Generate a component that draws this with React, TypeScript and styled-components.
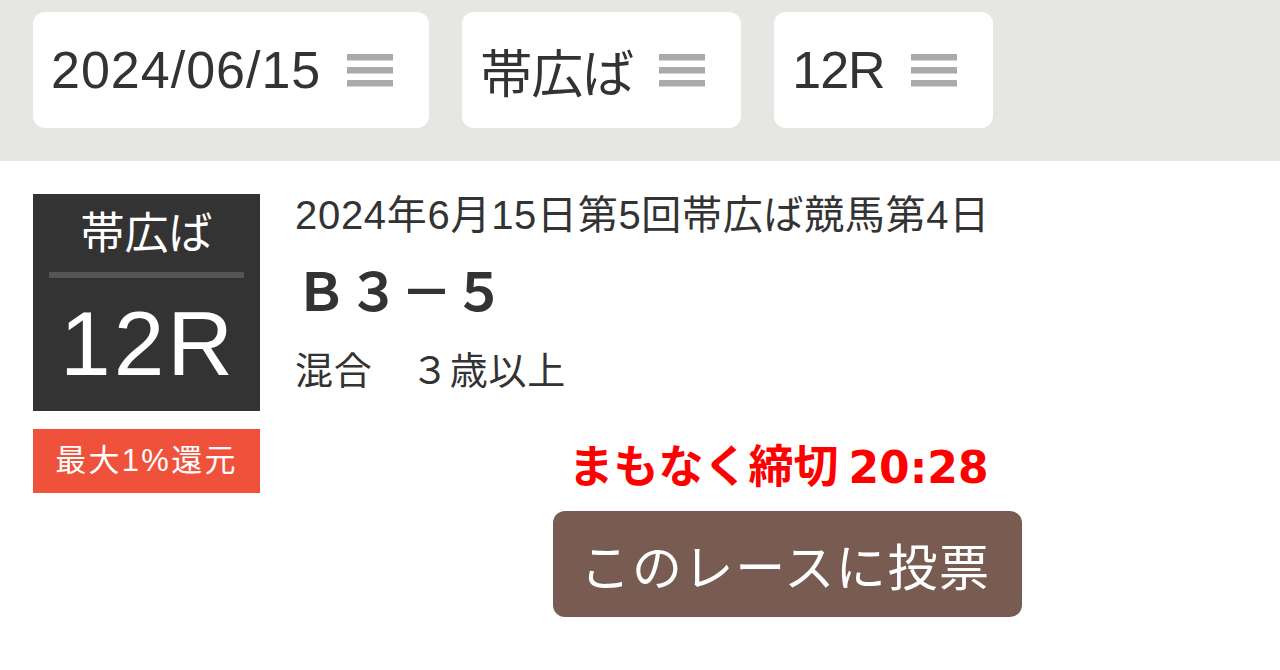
import React from 'react';
import styled, { createGlobalStyle } from 'styled-components';

const GlobalStyle = createGlobalStyle`
  body {
    margin: 0;
    background: #fff;
    font-family: "Liberation Sans", "Noto Sans CJK JP", sans-serif;
    color: #333;
  }
`;

const Header = styled.header`
  display: flex;
  gap: 33px;
  padding: 12px 33px 33px;
  background: #e6e6e2;
`;

const SelectBox = styled.div`
  display: flex;
  align-items: center;
  gap: 26px;
  height: 116px;
  padding: 0 36px 0 18px;
  background: #fff;
  border-radius: 12px;
  font-size: 52px;
  color: #333;
`;

const SelectLabel = styled.span<{ $spacing?: number }>`
  letter-spacing: ${(p) => p.$spacing ?? 0}px;
`;

const MenuIcon = () => (
  <svg width="46" height="33" viewBox="0 0 46 33">
    <rect x="0" y="0" width="46" height="6.5" fill="#aaa" />
    <rect x="0" y="13" width="46" height="6.5" fill="#aaa" />
    <rect x="0" y="26" width="46" height="6.5" fill="#aaa" />
  </svg>
);

const Main = styled.main`
  display: flex;
  gap: 35px;
  padding: 33px 0 0 33px;
`;

const LeftColumn = styled.div`
  display: flex;
  flex-direction: column;
  gap: 18px;
  width: 227px;
  flex-shrink: 0;
`;

const RaceBox = styled.div`
  display: flex;
  flex-direction: column;
  align-items: stretch;
  height: 217px;
  box-sizing: border-box;
  padding: 14px 0 17px;
  background: #333;
  color: #fff;
  text-align: center;
`;

const Venue = styled.div`
  font-size: 44px;
  line-height: 52px;
`;

const Divider = styled.div`
  height: 6px;
  margin: 12px 16px 0 16px;
  background: #555;
`;

const RaceNo = styled.div`
  margin-top: 16px;
  font-size: 91px;
  line-height: 100px;
  letter-spacing: 3px;
  text-indent: 3px;
`;

const Tag = styled.div`
  height: 64px;
  line-height: 64px;
  background: #ef513b;
  color: #fff;
  font-size: 31px;
  letter-spacing: 2.3px;
  text-align: center;
`;

const RightColumn = styled.div`
  flex: 1;
  display: flex;
  flex-direction: column;
`;

const Line = styled.div<{ $size: number; $height: number; $top?: number; $bold?: boolean }>`
  font-size: ${(p) => p.$size}px;
  line-height: ${(p) => p.$height}px;
  margin-top: ${(p) => p.$top ?? 0}px;
  font-weight: ${(p) => (p.$bold ? 700 : 400)};
  letter-spacing: 0.7px;
  color: #333;
  white-space: nowrap;
`;

const VoteArea = styled.div`
  display: flex;
  flex-direction: column;
  align-items: center;
  margin-top: 50px;
`;

const Deadline = styled.div`
  display: flex;
  align-items: baseline;
  gap: 10px;
  margin-right: 18px;
  font-size: 45px;
  line-height: 52px;
  font-weight: 700;
  color: #ff0000;
  white-space: nowrap;
`;

const Time = styled.span`
  font-family: "DejaVu Sans", "Liberation Sans", sans-serif;
  font-size: 44px;
`;

const VoteButton = styled.button`
  margin-top: 17px;
  height: 106px;
  padding: 0 31px 0 27px;
  border: none;
  border-radius: 12px;
  background: #785c52;
  color: #fff;
  font-family: inherit;
  font-size: 50px;
  letter-spacing: 1.6px;
  cursor: pointer;
`;

export default function App() {
  return (
    <>
      <GlobalStyle />
      <Header>
        <SelectBox>
          <SelectLabel $spacing={1}>2024/06/15</SelectLabel>
          <MenuIcon />
        </SelectBox>
        <SelectBox>
          <SelectLabel $spacing={-1}>帯広ば</SelectLabel>
          <MenuIcon />
        </SelectBox>
        <SelectBox>
          <SelectLabel $spacing={-1}>12R</SelectLabel>
          <MenuIcon />
        </SelectBox>
      </Header>
      <Main>
        <LeftColumn>
          <RaceBox>
            <Venue>帯広ば</Venue>
            <Divider />
            <RaceNo>12R</RaceNo>
          </RaceBox>
          <Tag>最大1%還元</Tag>
        </LeftColumn>
        <RightColumn>
          <Line $size={40} $height={42}>2024年6月15日第5回帯広ば競馬第4日</Line>
          <Line $size={52} $height={56} $top={29} $bold>
            Ｂ３－５
          </Line>
          <Line $size={38} $height={42} $top={29}>混合　３歳以上</Line>
          <VoteArea>
            <Deadline>
              <span>まもなく締切</span>
              <Time>20:28</Time>
            </Deadline>
            <VoteButton>このレースに投票</VoteButton>
          </VoteArea>
        </RightColumn>
      </Main>
    </>
  );
}
